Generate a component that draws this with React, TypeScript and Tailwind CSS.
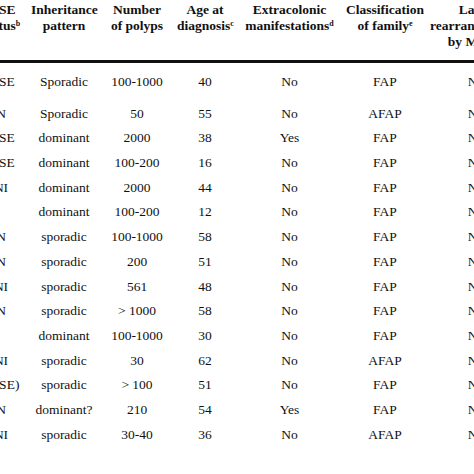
import React from "react";

const rows: string[][] = [
  ["MSE", "Sporadic", "100-1000", "40", "No", "FAP", "No"],
  ["N", "Sporadic", "50", "55", "No", "AFAP", "No"],
  ["MSE", "dominant", "2000", "38", "Yes", "FAP", "No"],
  ["MSE", "dominant", "100-200", "16", "No", "FAP", "No"],
  ["NI", "dominant", "2000", "44", "No", "FAP", "No"],
  ["", "dominant", "100-200", "12", "No", "FAP", "No"],
  ["N", "sporadic", "100-1000", "58", "No", "FAP", "No"],
  ["N", "sporadic", "200", "51", "No", "FAP", "No"],
  ["NI", "sporadic", "561", "48", "No", "FAP", "No"],
  ["N", "sporadic", "> 1000", "58", "No", "FAP", "No"],
  ["", "dominant", "100-1000", "30", "No", "FAP", "No"],
  ["NI", "sporadic", "30", "62", "No", "AFAP", "No"],
  ["(MSE)", "sporadic", "> 100", "51", "No", "FAP", "No"],
  ["N", "dominant?", "210", "54", "Yes", "FAP", "No"],
  ["NI", "sporadic", "30-40", "36", "No", "AFAP", "No"],
];

const grid = "grid grid-cols-[60px_66px_80px_56px_113px_78px_104px]";

function Sup({ c }: { c: string }) {
  return <sup className="text-[8px] font-bold">{c}</sup>;
}

export default function App() {
  return (
    <div className="w-[474px] h-[474px] overflow-hidden bg-white text-[#111] font-['Liberation_Serif',serif] text-[13.5px]">
      <div className="ml-[-29px] w-[557px]">
        <div className={`${grid} h-[59.5px] pt-[1.5px] font-bold leading-[16px] text-center`}>
          <div>
            MSE
            <br />
            status<Sup c="b" />
          </div>
          <div>
            Inheritance
            <br />
            pattern
          </div>
          <div>
            Number
            <br />
            of polyps
          </div>
          <div className="whitespace-nowrap">
            Age at
            <br />
            diagnosis<Sup c="c" />
          </div>
          <div>
            Extracolonic
            <br />
            manifestations<Sup c="d" />
          </div>
          <div className="whitespace-nowrap">
            Classification
            <br />
            of family<Sup c="e" />
          </div>
          <div>
            Large
            <br />
            rearrangements
            <br />
            by MLPA
          </div>
        </div>
        <div className="h-[3px] bg-[#111]" />
        <div className="pt-[7.2px]">
          {rows.map((r, i) => (
            <div
              key={i}
              className={`${grid} text-center whitespace-nowrap ${
                i === 0 ? "h-[32px] leading-[24.7px]" : "h-[24.7px] leading-[24.7px]"
              }`}
            >
              {r.map((c, j) => (
                <div key={j}>{c}</div>
              ))}
            </div>
          ))}
        </div>
      </div>
    </div>
  );
}
